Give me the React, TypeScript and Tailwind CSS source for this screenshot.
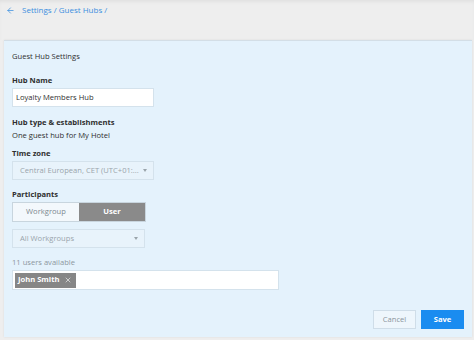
import React from "react";
import { ArrowLeft, X } from "lucide-react";

function Caret() {
  return <span className="w-0 h-0 border-l-[2.5px] border-r-[2.5px] border-t-[3px] border-l-transparent border-r-transparent border-t-[#9aa4ab]" />;
}

export default function App() {
  return (
    <div className="w-[474px] h-[340px] bg-[#eeeeee] overflow-hidden flex flex-col text-[7.6px] text-[#2f2f2f]" style={{ fontFamily: '"Open Sans", sans-serif' }}>
      <div className="h-[40px] shrink-0 flex items-start pt-[2px] pl-[6px] gap-[7px] shadow-[inset_0_3px_4px_-2px_rgba(0,0,0,0.08)]">
        <ArrowLeft className="w-[9px] h-[9px] text-[#3a8fe0] mt-[4px]" strokeWidth={2} />
        <div className="text-[8px] text-[#3a8fe0] leading-[16px]">Settings / Guest Hubs /</div>
      </div>
      <div className="ml-[4px] mr-[2px] h-[297px] bg-[#e4f2fc] border-t border-[#d3dee6] shadow-[0_0_2px_rgba(0,0,0,0.08)] px-[8px] pt-[9px] flex flex-col">
        <div className="leading-[12px]">Guest Hub Settings</div>

        <div className="font-bold mt-[12px] leading-[12px]">Hub Name</div>
        <div className="mt-[2px] w-[142px] h-[19px] bg-white border border-[#d4e2ec] flex items-center px-[3px]">Loyalty Members Hub</div>

        <div className="font-bold mt-[9px] leading-[12px]">Hub type &amp; establishments</div>
        <div className="leading-[12px] mt-[1px]">One guest hub for My Hotel</div>

        <div className="font-bold mt-[6px] leading-[12px]">Time zone</div>
        <div className="mt-[2px] w-[142px] h-[19px] bg-[#e8f3fb] border border-[#d4e2ec] flex items-center justify-between pl-[7px] pr-[6px] text-[#9aa4ab]">
          <span>Central European, CET (UTC+01:...</span>
          <Caret />
        </div>

        <div className="font-bold mt-[8px] leading-[12px]">Participants</div>
        <div className="mt-[2px] w-[134px] h-[20px] flex border border-[#c8d5de]">
          <div className="flex-1 bg-[#f3f8fc] text-[#7d8890] flex items-center justify-center">Workgroup</div>
          <div className="flex-1 bg-[#8a8a8a] text-white font-bold flex items-center justify-center">User</div>
        </div>

        <div className="mt-[7px] w-[133px] h-[19px] bg-[#e8f3fb] border border-[#d4e2ec] flex items-center justify-between pl-[7px] pr-[6px] text-[#9aa4ab]">
          <span>All Workgroups</span>
          <Caret />
        </div>

        <div className="mt-[8px] leading-[12px] text-[#8d979e]">11 users available</div>
        <div className="mt-[2px] w-[267px] h-[20px] bg-white border border-[#d4e2ec] flex items-center pl-[2px]">
          <div className="h-[15px] w-[61px] bg-[#868686] text-white font-bold flex items-center pl-[3px] gap-[5px]">
            <span>John Smith</span>
            <X className="w-[8px] h-[8px]" strokeWidth={1.8} />
          </div>
        </div>

        <div className="mt-[20px] flex justify-end gap-[5px]">
          <div className="w-[43px] h-[19px] bg-[#eef6fc] border border-[#cfdde8] text-[#8a949b] flex items-center justify-center">Cancel</div>
          <div className="w-[43px] h-[19px] bg-[#1a8cf0] text-white font-bold flex items-center justify-center">Save</div>
        </div>
      </div>
    </div>
  );
}
